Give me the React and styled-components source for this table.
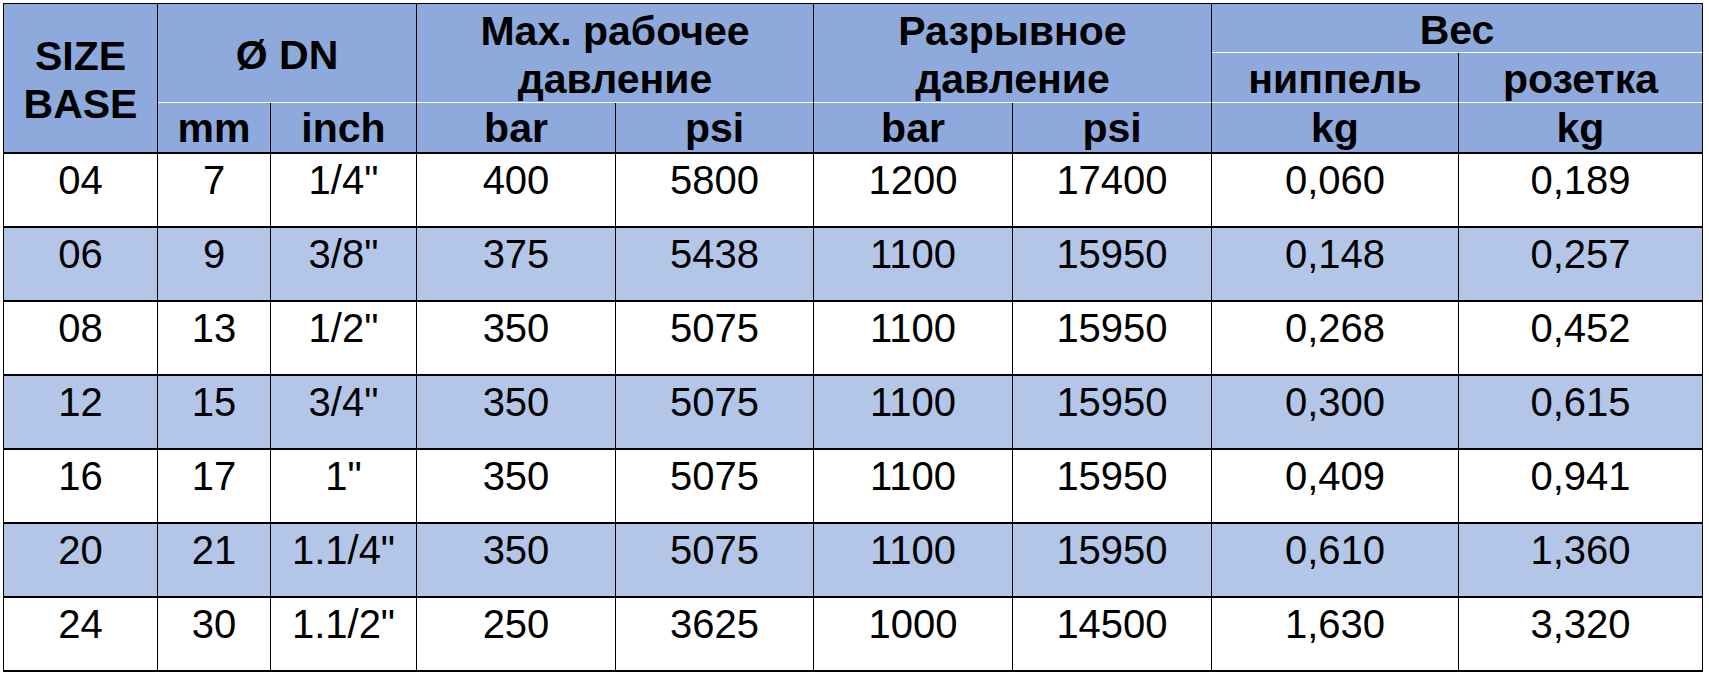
import React from 'react'
import styled, { createGlobalStyle } from 'styled-components'

const GlobalStyle = createGlobalStyle`
  html, body {
    margin: 0;
    padding: 0;
    background: #FFFFFF;
  }
  body {
    font-family: "Liberation Sans", Arial, sans-serif;
    color: #000000;
  }
`;

const HEAD = '#8EA9DB';
const STRIPE = '#B4C6E7';

const rows = [
  ['04', '7', '1/4"', '400', '5800', '1200', '17400', '0,060', '0,189'],
  ['06', '9', '3/8"', '375', '5438', '1100', '15950', '0,148', '0,257'],
  ['08', '13', '1/2"', '350', '5075', '1100', '15950', '0,268', '0,452'],
  ['12', '15', '3/4"', '350', '5075', '1100', '15950', '0,300', '0,615'],
  ['16', '17', '1"', '350', '5075', '1100', '15950', '0,409', '0,941'],
  ['20', '21', '1.1/4"', '350', '5075', '1100', '15950', '0,610', '1,360'],
  ['24', '30', '1.1/2"', '250', '3625', '1000', '14500', '1,630', '3,320'],
]

// header cells: [text, column, row, colSpan, rowSpan, bottom line]
const head = [
  [['SIZE', 'BASE'], 1, 1, 1, 3, 'thick'],
  [['Ø DN'], 2, 1, 2, 2, 'white'],
  [['Max. рабочее', 'давление'], 4, 1, 2, 2, 'white'],
  [['Разрывное', 'давление'], 6, 1, 2, 2, 'white'],
  [['Вес'], 8, 1, 2, 1, 'white'],
  [['ниппель'], 8, 2, 1, 1, 'white'],
  [['розетка'], 9, 2, 1, 1, 'white'],
  [['mm'], 2, 3, 1, 1, 'thick'],
  [['inch'], 3, 3, 1, 1, 'thick'],
  [['bar'], 4, 3, 1, 1, 'thick'],
  [['psi'], 5, 3, 1, 1, 'thick'],
  [['bar'], 6, 3, 1, 1, 'thick'],
  [['psi'], 7, 3, 1, 1, 'thick'],
  [['kg'], 8, 3, 1, 1, 'thick'],
  [['kg'], 9, 3, 1, 1, 'thick'],
]

function App() {
  return (
    <Page>
      <GlobalStyle />
      <Table>
        {head.map(([lines, col, row, cs, rs, bottom], i) => (
          <HeadCell key={'h' + i} $col={col} $row={row} $cs={cs} $rs={rs} $bottom={bottom}>
            <HeadText>
              {lines.map((l, j) => <Line key={j}>{l}</Line>)}
            </HeadText>
          </HeadCell>
        ))}
        {rows.map((r, ri) =>
          r.map((v, ci) => (
            <BodyCell key={ri + '-' + ci} $striped={ri % 2 === 1}>
              {v}
            </BodyCell>
          ))
        )}
      </Table>
    </Page>
  )
}

export default App

const Page = styled.div`
  padding: 3px 0 0 3px;
`;

const Table = styled.div`
  display: grid;
  grid-template-columns: 154px 113px 146px 199px 198px 199px 199px 247px 244px;
  grid-template-rows: 49px 50px 51px repeat(7, 74px);
  width: max-content;
  border-top: 1px solid #000000;
  border-left: 1px solid #000000;
`;

const Cell = styled.div`
  box-sizing: border-box;
  border-right: 1px solid #000000;
  display: flex;
  justify-content: center;
  text-align: center;
`;

const HeadCell = styled(Cell)`
  grid-column: ${p => p.$col} / span ${p => p.$cs};
  grid-row: ${p => p.$row} / span ${p => p.$rs};
  background: ${HEAD};
  align-items: center;
  padding-top: ${p => p.$row === 3 ? '1px' : '3px'};
  border-bottom: ${p => p.$bottom === 'thick' ? '2px solid #000000' : '1px solid #FFFFFF'};
`;

const HeadText = styled.div`
  font-size: 41px;
  font-weight: 700;
  line-height: 48px;
  display: flex;
  flex-direction: column;
  align-items: center;
`;

const Line = styled.span`
  white-space: nowrap;
`;

const BodyCell = styled(Cell)`
  background: ${p => p.$striped ? STRIPE : '#FFFFFF'};
  border-bottom: 2px solid #000000;
  align-items: flex-start;
  padding-top: 6px;
  font-size: 40px;
  line-height: 40px;
  white-space: nowrap;
`;
